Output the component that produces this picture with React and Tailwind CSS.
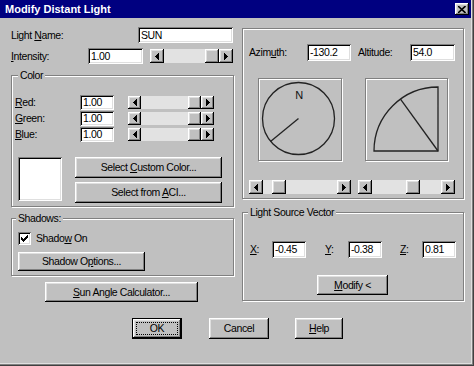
import React from "react"

const raised =
  "bg-[#c0c0c0] shadow-[inset_-1px_-1px_#000,inset_1px_1px_#fff,inset_-2px_-2px_#808080,inset_2px_2px_#dfdfdf]"
const sunken =
  "bg-white shadow-[inset_1px_1px_#808080,inset_-1px_-1px_#fff,inset_2px_2px_#000,inset_-2px_-2px_#dfdfdf]"
const etched = "border border-[#808080] shadow-[inset_1px_1px_#fff,1px_1px_#fff]"

function U({ children }) {
  return <span className="underline">{children}</span>
}

function Field({ value, className = "" }) {
  return <div className={`${sunken} flex items-center pl-[3px] ${className}`}>{value}</div>
}

function Btn({ children, className = "" }) {
  return (
    <div className={`${raised} flex items-center justify-center ${className}`}>
      <span>{children}</span>
    </div>
  )
}

function Group({ label, labelClass = "", className = "", children }) {
  return (
    <div className={`${etched} ${className}`}>
      {label && <div className={`-mt-[7px] w-fit bg-[#c0c0c0] px-[2px] ${labelClass}`}>{label}</div>}
      {children}
    </div>
  )
}

function Arrow({ dir, size }) {
  return (
    <div className={`${raised} flex shrink-0 items-center justify-center`} style={{ width: size, height: size }}>
      <svg width="4" height="7" viewBox="0 0 4 7">
        {dir === "left" ? (
          <path d="M0 3h1v1h-1z M1 2h1v3h-1z M2 1h1v5h-1z M3 0h1v7h-1z" fill="#000" />
        ) : (
          <path d="M3 3h1v1h-1z M2 2h1v3h-1z M1 1h1v5h-1z M0 0h1v7h-1z" fill="#000" />
        )}
      </svg>
    </div>
  )
}

function ScrollBar({ w, h, pos, className = "" }) {
  const track = w - 2 * h
  const offset = Math.round(pos * (track - h))
  return (
    <div className={`flex shrink-0 ${className}`} style={{ width: w, height: h }}>
      <Arrow dir="left" size={h} />
      <div className="flex flex-1 bg-[#e2e2e2]">
        <div className={raised} style={{ width: h, height: h, marginLeft: offset }} />
      </div>
      <Arrow dir="right" size={h} />
    </div>
  )
}

function Compass() {
  return (
    <svg width="82" height="81" viewBox="0 0 82 81" className="block">
      <circle cx="39.5" cy="39.5" r="36" fill="none" stroke="#222" strokeWidth="1.3" />
      <text x="40" y="20" textAnchor="middle" fontSize="11" fontFamily="Liberation Sans, sans-serif" fill="#111">
        N
      </text>
      <line x1="39.5" y1="39.5" x2="11.5" y2="62.5" stroke="#222" strokeWidth="1.3" />
    </svg>
  )
}

function AltitudeArc() {
  return (
    <svg width="81" height="81" viewBox="0 0 81 81" className="block">
      <path d="M72 8 A64 64 0 0 0 8 72 L72 72 Z" fill="none" stroke="#222" strokeWidth="1.3" />
      <line x1="72" y1="72" x2="34.5" y2="20.2" stroke="#222" strokeWidth="1.3" />
    </svg>
  )
}

function ColorRow({ label, value }) {
  return (
    <div className="flex h-[15px] items-center">
      <span className="w-[65px]">{label}</span>
      <Field value={value} className="h-[15px] w-[34px]" />
      <ScrollBar className="ml-[14px]" w={86} h={13} pos={1} />
    </div>
  )
}

export default function App() {
  return (
    <div className="h-[366px] w-[474px] overflow-hidden bg-[#c0c0c0] font-['Liberation_Sans',Arial,sans-serif] text-[10.5px] leading-[13px] tracking-[-0.4px] text-black shadow-[inset_-1px_-1px_#404040,inset_-2px_-2px_#808080,inset_-3px_-3px_#dfdfdf]">
      {/* title bar */}
      <div className="mr-[3px] flex h-[18px] items-center justify-between bg-[#000080] pl-[5px] pr-[2px]">
        <span className="text-[11px] font-bold tracking-normal text-white">Modify Distant Light</span>
        <div className={`${raised} flex h-[12px] w-[14px] items-center justify-center`}>
          <svg width="8" height="7" viewBox="0 0 8 7">
            <path d="M0 0 L7.5 7 M7.5 0 L0 7" stroke="#000" strokeWidth="1.6" />
          </svg>
        </div>
      </div>

      <div className="flex pl-[11px]">
        {/* left column */}
        <div className="flex w-[223px] flex-col">
          <div className="mt-[9px] flex h-[16px] items-center">
            <span className="flex-1">
              Light <U>N</U>ame:
            </span>
            <Field value="SUN" className="mr-[1px] h-[16px] w-[95px]" />
          </div>
          <div className="mt-[5px] flex h-[16px] items-center">
            <span className="w-[77px]">
              <U>I</U>ntensity:
            </span>
            <Field value="1.00" className="h-[16px] w-[55px]" />
            <ScrollBar className="ml-[7px]" w={83} h={14} pos={1} />
          </div>

          <Group label="Color" labelClass="ml-[6px]" className="mt-[11px] h-[132px]">
            <div className="mt-[13px] flex flex-col gap-[1px] pl-[3px]">
              <ColorRow label={<><U>R</U>ed:</>} value="1.00" />
              <ColorRow label={<><U>G</U>reen:</>} value="1.00" />
              <ColorRow label={<><U>B</U>lue:</>} value="1.00" />
            </div>
            <div className="mt-[15px] flex pl-[6px]">
              <div className={`${sunken} h-[44px] w-[44px]`} />
              <div className="ml-[13px] flex flex-col gap-[4px]">
                <Btn className="h-[21px] w-[147px]">
                  Select <U>C</U>ustom Color...
                </Btn>
                <Btn className="h-[21px] w-[147px]">
                  Select from <U>A</U>CI...
                </Btn>
              </div>
            </div>
          </Group>

          <Group label="Shadows:" labelClass="ml-[4px]" className="mt-[11px] h-[58px]">
            <div className="mt-[7px] flex items-center pl-[6px]">
              <div className={`${sunken} flex h-[13px] w-[13px] items-center justify-center`}>
                <svg width="7" height="7" viewBox="0 0 7 7">
                  <path d="M0 2h1v3h-1z M1 3h1v3h-1z M2 4h1v3h-1z M3 3h1v3h-1z M4 2h1v3h-1z M5 1h1v3h-1z M6 0h1v3h-1z" fill="#000" />
                </svg>
              </div>
              <span className="ml-[5px]">
                Shado<U>w</U> On
              </span>
            </div>
            <Btn className="ml-[6px] mt-[7px] h-[19px] w-[127px]">
              Shadow O<U>p</U>tions...
            </Btn>
          </Group>

          <Btn className="ml-[34px] mt-[6px] h-[20px] w-[153px]">
            <U>S</U>un Angle Calculator...
          </Btn>
        </div>

        {/* right column */}
        <div className="ml-[8px] flex w-[222px] flex-col">
          <div className={`${etched} mt-[10px] h-[171px]`}>
            <div className="mt-[15px] flex h-[17px] items-center pl-[6px]">
              <span className="w-[58px]">
                Azim<U>u</U>th:
              </span>
              <Field value="-130.2" className="h-[17px] w-[44px]" />
              <span className="ml-[7px] w-[52px]">Altitude:</span>
              <Field value="54.0" className="h-[17px] w-[45px]" />
            </div>
            <div className="mt-[17px] flex">
              <div className={`${etched} ml-[15px] h-[83px] w-[84px]`}>
                <Compass />
              </div>
              <div className={`${etched} ml-[23px] h-[83px] w-[83px]`}>
                <AltitudeArc />
              </div>
            </div>
            <div className="mt-[19px] flex pl-[6px]">
              <ScrollBar w={102} h={14} pos={0.15} />
              <ScrollBar className="ml-[7px]" w={97} h={14} pos={0.62} />
            </div>
          </div>

          <Group label="Light Source Vector" labelClass="ml-[5px]" className="mt-[13px] h-[89px]">
            <div className="mt-[22px] flex h-[17px] items-center pl-[7px]">
              <span className="w-[22px]">
                <U>X</U>:
              </span>
              <Field value="-0.45" className="h-[17px] w-[34px]" />
              <span className="ml-[19px] w-[23px]">
                <U>Y</U>:
              </span>
              <Field value="-0.38" className="h-[17px] w-[34px]" />
              <span className="ml-[18px] w-[22px]">
                <U>Z</U>:
              </span>
              <Field value="0.81" className="h-[17px] w-[34px]" />
            </div>
            <Btn className="ml-[74px] mt-[17px] h-[20px] w-[71px]">
              <U>M</U>odify &lt;
            </Btn>
          </Group>
        </div>
      </div>

      {/* dialog buttons */}
      <div className="mt-[16px] flex pl-[132px]">
        <div className="h-[21px] w-[50px] border border-black">
          <div className={`${raised} flex h-full w-full items-center justify-center p-[3px]`}>
            <div className="flex h-full w-full items-center justify-center border border-dotted border-black">OK</div>
          </div>
        </div>
        <Btn className="ml-[27px] h-[21px] w-[60px]">Cancel</Btn>
        <Btn className="ml-[26px] h-[21px] w-[48px]">
          <U>H</U>elp
        </Btn>
      </div>
    </div>
  )
}
